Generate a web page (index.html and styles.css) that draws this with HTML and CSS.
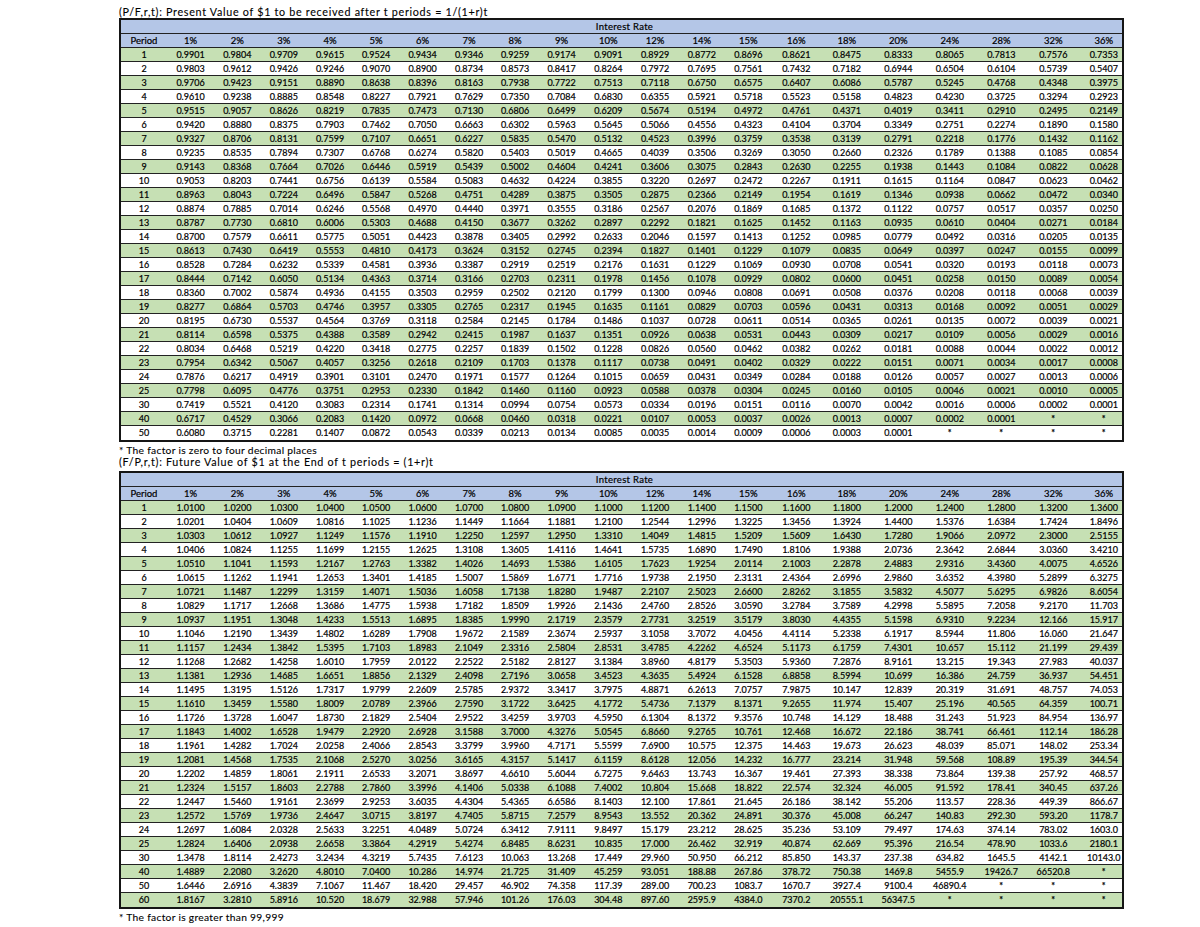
FILE: index.html
```html
<!DOCTYPE html>
<html lang="en">
<head>
<meta charset="utf-8">
<title>Interest Factor Tables</title>
<link rel="stylesheet" href="styles.css">
</head>
<body>
<div class="page">
  <div class="title">(P/F,r,t): Present Value of $1 to be received after t periods = 1/(1+r)t</div>
  <div class="sheet" id="pv">
    <div class="row head"><div class="span">Interest Rate</div></div>
    <div class="row head">
      <div>Period</div><div>1%</div><div>2%</div><div>3%</div><div>4%</div><div>5%</div><div>6%</div><div>7%</div><div>8%</div><div>9%</div><div>10%</div><div>12%</div><div>14%</div><div>15%</div><div>16%</div><div>18%</div><div>20%</div><div>24%</div><div>28%</div><div>32%</div><div>36%</div>
    </div>
  </div>
  <div class="note">* The factor is zero to four decimal places</div>
  <div class="title">(F/P,r,t): Future Value of $1 at the End of t periods = (1+r)t</div>
  <div class="sheet second" id="fv">
    <div class="row head"><div class="span">Interest Rate</div></div>
    <div class="row head">
      <div>Period</div><div>1%</div><div>2%</div><div>3%</div><div>4%</div><div>5%</div><div>6%</div><div>7%</div><div>8%</div><div>9%</div><div>10%</div><div>12%</div><div>14%</div><div>15%</div><div>16%</div><div>18%</div><div>20%</div><div>24%</div><div>28%</div><div>32%</div><div>36%</div>
    </div>
  </div>
  <div class="note">* The factor is greater than 99,999</div>
</div>
<script src="script.js"></script>
</body>
</html>
```

FILE: styles.css
```css
html, body {
  margin: 0;
  padding: 0;
  background: #ffffff;
}
body {
  font-family: Lato, "Noto Sans", "DejaVu Sans", sans-serif;
  color: #000000;
}
.page {
  width: 1005px;
  margin-left: 119px;
  padding-top: 6px;
}
.title,
.note {
  line-height: 12px;
  height: 12px;
  white-space: nowrap;
  -webkit-text-stroke: 0.1px #000;
}
.title {
  font-size: 10.75px;
  letter-spacing: 0.7px;
}
.note {
  font-size: 10.25px;
  letter-spacing: 0.3px;
  margin-top: 2px;
}
.sheet {
  border: 2px solid #151515;
}
.sheet.second {
  margin-top: 3px;
}
.row {
  display: grid;
  grid-template-columns: 46px 47px 46.5px 46.5px 46px 46px 47px 46px 46px 47px 46.5px 47px 46.5px 46.5px 49.5px 51.5px 51.5px 51.5px 51.5px 52.5px 1fr;
  box-sizing: border-box;
  height: 14px;
  border-bottom: 1px solid #222;
  font-size: 9px;
  line-height: 13px;
  text-align: center;
  white-space: nowrap;
  -webkit-text-stroke: 0.2px #000;
}
.row:last-child {
  border-bottom: none;
}
.row > div:last-child {
  padding-left: 6px;
}
.row > .span {
  grid-column: 1 / -1;
  padding-left: 0;
  font-size: 9.5px;
  letter-spacing: 0.3px;
}
.head {
  background: #b4c6e7;
  font-size: 9.5px;
}
.alt {
  background: #c6e0b4;
}
```

FILE: script.js
```js
(function () {
  var rates = [1, 2, 3, 4, 5, 6, 7, 8, 9, 10, 12, 14, 15, 16, 18, 20, 24, 28, 32, 36];
  var pvPeriods = [];
  var fvPeriods = [];
  for (var t = 1; t <= 25; t++) { pvPeriods.push(t); fvPeriods.push(t); }
  pvPeriods.push(30, 40, 50);
  fvPeriods.push(30, 40, 50, 60);

  function pvFmt(f) {
    var s = (1 / f).toFixed(4);
    return s === '0.0000' ? '*' : s;
  }
  function fvFmt(v) {
    if (v > 99999) return '*';
    if (v < 10) return v.toFixed(4);
    if (v < 100) return v.toFixed(3);
    if (v < 1000) return v.toFixed(2);
    return v.toFixed(1);
  }
  function build(id, periods, fmt) {
    var sheet = document.getElementById(id);
    periods.forEach(function (t, i) {
      var row = document.createElement('div');
      row.className = 'row' + (i % 2 === 0 ? ' alt' : '');
      var c = document.createElement('div');
      c.textContent = String(t);
      row.appendChild(c);
      rates.forEach(function (r) {
        var d = document.createElement('div');
        d.textContent = fmt(Math.pow(1 + r / 100, t));
        row.appendChild(d);
      });
      sheet.appendChild(row);
    });
  }
  build('pv', pvPeriods, pvFmt);
  build('fv', fvPeriods, fvFmt);
})();
```
